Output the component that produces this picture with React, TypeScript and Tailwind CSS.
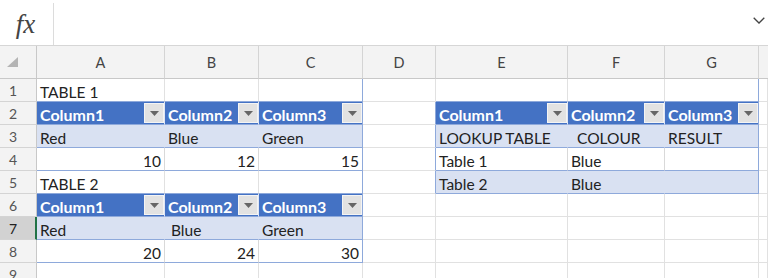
import React from "react";

type CellProps = {
  children?: React.ReactNode;
  r?: string;
  b?: string;
  bg?: string;
  extra?: string;
};

function Cell({ children, r = "border-r-[#e1e1e1]", b = "border-b-[#e1e1e1]", bg = "bg-white", extra = "" }: CellProps) {
  return (
    <div
      className={`h-[23px] border-r border-b border-solid ${r} ${b} ${bg} flex items-end pb-0 px-[3px] text-[15.5px] leading-[18px] text-[#222] whitespace-nowrap overflow-hidden ${extra}`}
    >
      {children}
    </div>
  );
}

function RowHead({ n, active = false }: { n: number; active?: boolean }) {
  return (
    <div
      className={`h-[23px] border-b border-b-[#d4d4d4] ${
        active ? "bg-[#d2d2d2] text-[#222] border-r-[2px] border-r-[#217346]" : "bg-[#f3f3f3] text-[#555] border-r border-r-[#c8c8c8]"
      } flex items-center text-[14px] leading-none`}
    >
      <span className="w-[26px] text-center pt-[2px]">{n}</span>
    </div>
  );
}

function Dropdown() {
  return (
    <div className="ml-auto h-[20px] w-[20px] shrink-0 bg-[#e2e2e2] border border-[#f4f4f4] flex items-center justify-center">
      <svg width="9" height="5" viewBox="0 0 9 5">
        <path d="M0 0 L9 0 L4.5 5 Z" fill="#666" />
      </svg>
    </div>
  );
}

function HeadCell({ label, last }: { label: string; last?: boolean }) {
  return (
    <div
      className={`h-[23px] border-r border-b ${last ? "border-r-[#8ea9db]" : "border-r-[#dfe6f4]"} border-b-[#8ea9db] bg-[#4472c4] flex items-center pl-[3px] text-[16px] leading-[18px] font-bold text-white whitespace-nowrap overflow-hidden`}
    >
      <span className="pt-[3px]">{label}</span>
      <Dropdown />
    </div>
  );
}

const BLUE_B = "border-b-[#8ea9db]";
const BLUE_R = "border-r-[#8ea9db]";
const BAND = "bg-[#d9e1f2]";
const BAND_R = "border-r-[#d9e1f2]";
const WHITE_R = "border-r-[#d9d9d9]";

function ColHead({ label, last }: { label: string; last?: boolean }) {
  return (
    <div
      className={`h-[33px] border-b border-b-[#c8c8c8] ${last ? "" : "border-r border-r-[#d4d4d4]"} bg-[#f3f3f3] flex items-center justify-center text-[14.5px] text-[#444] pt-[1px]`}
    >
      {label}
    </div>
  );
}

export default function App() {
  const font = { fontFamily: "Lato, 'Open Sans', sans-serif" };
  return (
    <div className="w-[768px] h-[278px] overflow-hidden bg-white" style={font}>
      {/* Formula bar */}
      <div className="h-[46px] flex border-b border-b-[#d6d6d6] bg-white">
        <div className="w-[54px] mt-[3px] border-r border-r-[#dcdcdc] flex items-center justify-center">
          <span
            className="text-[27px] italic text-[#444] leading-none mt-[0px] ml-[-2px]"
            style={{ fontFamily: "'Liberation Serif', 'DejaVu Serif', serif" }}
          >
            fx
          </span>
        </div>
        <div className="flex-1" />
        <div className="w-[15px] flex items-start pt-[17px]">
          <svg width="12" height="7" viewBox="0 0 12 7">
            <path d="M0.7 0.7 L6 6 L11.3 0.7" fill="none" stroke="#444" strokeWidth="1.3" />
          </svg>
        </div>
      </div>

      {/* Grid */}
      <div className="grid grid-cols-[37px_128px_94px_104px_73px_132px_97px_94px_1fr]">
        {/* Column headers */}
        <div className="h-[33px] border-b border-b-[#c8c8c8] border-r border-r-[#c8c8c8] bg-[#f3f3f3] flex items-end pl-[7px] pb-[11px]">
          <svg width="11" height="10" viewBox="0 0 11 10">
            <path d="M11 0 L11 10 L0 10 Z" fill="#b4b4b4" />
          </svg>
        </div>
        <ColHead label="A" />
        <ColHead label="B" />
        <ColHead label="C" />
        <ColHead label="D" />
        <ColHead label="E" />
        <ColHead label="F" />
        <ColHead label="G" />
        <ColHead label="" last />

        {/* Row 1 */}
        <RowHead n={1} />
        <Cell b={BLUE_B}>TABLE 1</Cell>
        <Cell b={BLUE_B} />
        <Cell b={BLUE_B} r={BLUE_R} />
        <Cell />
        <Cell b={BLUE_B} />
        <Cell b={BLUE_B} />
        <Cell b={BLUE_B} r={BLUE_R} />
        <Cell />

        {/* Row 2 */}
        <RowHead n={2} />
        <HeadCell label="Column1" />
        <HeadCell label="Column2" />
        <HeadCell label="Column3" last />
        <Cell r={BLUE_R} />
        <HeadCell label="Column1" />
        <HeadCell label="Column2" />
        <HeadCell label="Column3" last />
        <Cell />

        {/* Row 3 */}
        <RowHead n={3} />
        <Cell bg={BAND} b={BLUE_B} r={BAND_R}>Red</Cell>
        <Cell bg={BAND} b={BLUE_B} r={BAND_R}>Blue</Cell>
        <Cell bg={BAND} b={BLUE_B} r={BLUE_R}>Green</Cell>
        <Cell r={BLUE_R} />
        <Cell bg={BAND} b={BLUE_B} r={BAND_R}>LOOKUP TABLE</Cell>
        <Cell bg={BAND} b={BLUE_B} r={BAND_R} extra="pl-[9px]">COLOUR</Cell>
        <Cell bg={BAND} b={BLUE_B} r={BLUE_R}>RESULT</Cell>
        <Cell />

        {/* Row 4 */}
        <RowHead n={4} />
        <Cell b={BLUE_B} r={WHITE_R} extra="justify-end">10</Cell>
        <Cell b={BLUE_B} r={WHITE_R} extra="justify-end">12</Cell>
        <Cell b={BLUE_B} r={BLUE_R} extra="justify-end">15</Cell>
        <Cell r={BLUE_R} />
        <Cell b={BLUE_B} r={WHITE_R}>Table 1</Cell>
        <Cell b={BLUE_B} r={WHITE_R}>Blue</Cell>
        <Cell b={BLUE_B} r={BLUE_R} />
        <Cell />

        {/* Row 5 */}
        <RowHead n={5} />
        <Cell b={BLUE_B}>TABLE 2</Cell>
        <Cell b={BLUE_B} />
        <Cell b={BLUE_B} r={BLUE_R} />
        <Cell r={BLUE_R} />
        <Cell bg={BAND} b={BLUE_B} r={BAND_R}>Table 2</Cell>
        <Cell bg={BAND} b={BLUE_B} r={BAND_R}>Blue</Cell>
        <Cell bg={BAND} b={BLUE_B} r={BLUE_R} />
        <Cell />

        {/* Row 6 */}
        <RowHead n={6} />
        <HeadCell label="Column1" />
        <HeadCell label="Column2" />
        <HeadCell label="Column3" last />
        <Cell />
        <Cell />
        <Cell />
        <Cell />
        <Cell />

        {/* Row 7 */}
        <RowHead n={7} active />
        <Cell bg={BAND} b={BLUE_B} r={BAND_R}>Red</Cell>
        <Cell bg={BAND} b={BLUE_B} r={BAND_R} extra="pl-[6px]">Blue</Cell>
        <Cell bg={BAND} b={BLUE_B} r={BLUE_R}>Green</Cell>
        <Cell />
        <Cell />
        <Cell />
        <Cell />
        <Cell />

        {/* Row 8 */}
        <RowHead n={8} />
        <Cell b={BLUE_B} r={WHITE_R} extra="justify-end">20</Cell>
        <Cell b={BLUE_B} r={WHITE_R} extra="justify-end">24</Cell>
        <Cell b={BLUE_B} r={BLUE_R} extra="justify-end">30</Cell>
        <Cell />
        <Cell />
        <Cell />
        <Cell />
        <Cell />

        {/* Row 9 */}
        <RowHead n={9} />
        <Cell />
        <Cell />
        <Cell />
        <Cell />
        <Cell />
        <Cell />
        <Cell />
        <Cell />
      </div>
    </div>
  );
}
